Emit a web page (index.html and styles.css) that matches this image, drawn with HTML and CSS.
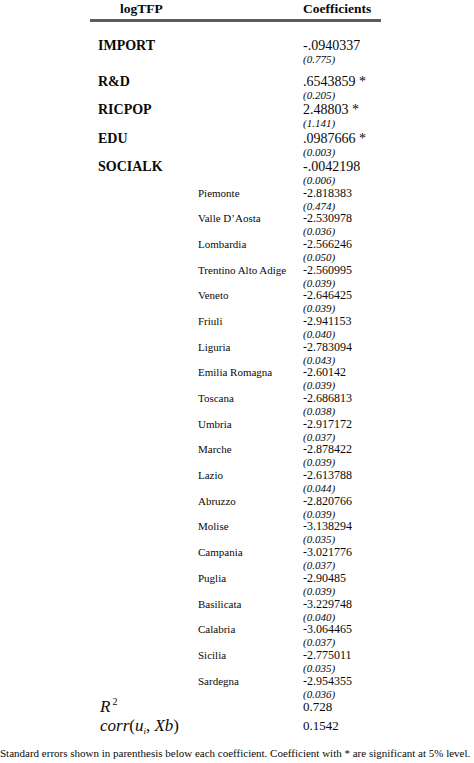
FILE: index.html
```html
<!DOCTYPE html>
<html>
<head>
<meta charset="utf-8">
<link rel="stylesheet" href="styles.css">
</head>
<body>
<div class="page">
  <div class="table">
    <div class="head">
      <div class="h-label">logTFP</div>
      <div class="h-coef">Coefficients</div>
    </div>
    <div class="vars">
      <div class="var first"><div class="v-label">IMPORT</div><div class="v-cell"><div class="v-val">-.0940337</div><div class="se">(0.775)</div></div></div>
      <div class="var gap"><div class="v-label">R&amp;D</div><div class="v-cell"><div class="v-val">.6543859 *</div><div class="se">(0.205)</div></div></div>
      <div class="var"><div class="v-label">RICPOP</div><div class="v-cell"><div class="v-val">2.48803 *</div><div class="se">(1.141)</div></div></div>
      <div class="var"><div class="v-label">EDU</div><div class="v-cell"><div class="v-val">.0987666 *</div><div class="se">(0.003)</div></div></div>
      <div class="var"><div class="v-label">SOCIALK</div><div class="v-cell"><div class="v-val">-.0042198</div><div class="se">(0.006)</div></div></div>
    </div>
    <div class="regions">
      <div class="reg"><div class="r-name">Piemonte</div><div class="r-cell"><div class="r-val">-2.818383</div><div class="se">(0.474)</div></div></div>
      <div class="reg"><div class="r-name">Valle D’Aosta</div><div class="r-cell"><div class="r-val">-2.530978</div><div class="se">(0.036)</div></div></div>
      <div class="reg"><div class="r-name">Lombardia</div><div class="r-cell"><div class="r-val">-2.566246</div><div class="se">(0.050)</div></div></div>
      <div class="reg"><div class="r-name">Trentino Alto Adige</div><div class="r-cell"><div class="r-val">-2.560995</div><div class="se">(0.039)</div></div></div>
      <div class="reg"><div class="r-name">Veneto</div><div class="r-cell"><div class="r-val">-2.646425</div><div class="se">(0.039)</div></div></div>
      <div class="reg"><div class="r-name">Friuli</div><div class="r-cell"><div class="r-val">-2.941153</div><div class="se">(0.040)</div></div></div>
      <div class="reg"><div class="r-name">Liguria</div><div class="r-cell"><div class="r-val">-2.783094</div><div class="se">(0.043)</div></div></div>
      <div class="reg"><div class="r-name">Emilia Romagna</div><div class="r-cell"><div class="r-val">-2.60142</div><div class="se">(0.039)</div></div></div>
      <div class="reg"><div class="r-name">Toscana</div><div class="r-cell"><div class="r-val">-2.686813</div><div class="se">(0.038)</div></div></div>
      <div class="reg"><div class="r-name">Umbria</div><div class="r-cell"><div class="r-val">-2.917172</div><div class="se">(0.037)</div></div></div>
      <div class="reg"><div class="r-name">Marche</div><div class="r-cell"><div class="r-val">-2.878422</div><div class="se">(0.039)</div></div></div>
      <div class="reg"><div class="r-name">Lazio</div><div class="r-cell"><div class="r-val">-2.613788</div><div class="se">(0.044)</div></div></div>
      <div class="reg"><div class="r-name">Abruzzo</div><div class="r-cell"><div class="r-val">-2.820766</div><div class="se">(0.039)</div></div></div>
      <div class="reg"><div class="r-name">Molise</div><div class="r-cell"><div class="r-val">-3.138294</div><div class="se">(0.035)</div></div></div>
      <div class="reg"><div class="r-name">Campania</div><div class="r-cell"><div class="r-val">-3.021776</div><div class="se">(0.037)</div></div></div>
      <div class="reg"><div class="r-name">Puglia</div><div class="r-cell"><div class="r-val">-2.90485</div><div class="se">(0.039)</div></div></div>
      <div class="reg"><div class="r-name">Basilicata</div><div class="r-cell"><div class="r-val">-3.229748</div><div class="se">(0.040)</div></div></div>
      <div class="reg"><div class="r-name">Calabria</div><div class="r-cell"><div class="r-val">-3.064465</div><div class="se">(0.037)</div></div></div>
      <div class="reg"><div class="r-name">Sicilia</div><div class="r-cell"><div class="r-val">-2.775011</div><div class="se">(0.035)</div></div></div>
      <div class="reg"><div class="r-name">Sardegna</div><div class="r-cell"><div class="r-val">-2.954355</div><div class="se">(0.036)</div></div></div>
    </div>
    <div class="stats">
      <div class="stat"><div class="s-label"><i>R</i><sup>2</sup></div><div class="s-val">0.728</div></div>
      <div class="stat"><div class="s-label"><i>corr</i>(<i>u</i><sub><i>i</i></sub>, <i>Xb</i>)</div><div class="s-val">0.1542</div></div>
    </div>
  </div>
  <div class="note">Standard errors shown in parenthesis below each coefficient. Coefficient with * are significant at 5% level.</div>
</div>
</body>
</html>
```
FILE: styles.css
```css
html, body {
  margin: 0;
  padding: 0;
  background: #ffffff;
}
body {
  font-family: "Liberation Serif", "Times New Roman", serif;
  color: #0a0a0a;
}
.page {
  width: 474px;
  height: 763px;
  overflow: hidden;
}
.table {
  margin-left: 90px;
  width: 291px;
}
.head {
  display: flex;
  font-weight: bold;
  font-size: 13.5px;
  line-height: 17px;
  padding-bottom: 2px;
  border-bottom: 3px solid #5c5c5c;
}
.h-label {
  width: 213px;
  padding-left: 30px;
  box-sizing: border-box;
}
.h-coef {
  flex: 1;
}
.vars {
  padding-top: 15.5px;
}
.var {
  display: flex;
}
.var.gap {
  margin-top: 7.5px;
}
.v-label {
  width: 213px;
  padding-left: 8px;
  box-sizing: border-box;
  font-weight: bold;
  font-size: 14px;
  line-height: 15px;
}
.v-val {
  font-size: 14px;
  line-height: 15px;
}
.v-cell .se {
  line-height: 13.5px;
}
.se {
  font-style: italic;
  font-size: 11px;
}
.regions {
  margin-top: -1px;
}
.reg {
  display: flex;
}
.r-name {
  width: 213px;
  padding-left: 108px;
  box-sizing: border-box;
  font-size: 11px;
  line-height: 13px;
}
.r-val {
  font-size: 12px;
  line-height: 13px;
}
.r-cell .se {
  line-height: 12.68px;
}
.stats {
  margin-top: -3px;
}
.stat {
  display: flex;
  align-items: center;
  height: 19px;
}
.s-label {
  width: 213px;
  padding-left: 10px;
  box-sizing: border-box;
  font-size: 17px;
  line-height: 19px;
}
.s-label sup {
  font-size: 10px;
  vertical-align: 7px;
  line-height: 0;
  margin-left: 2px;
}
.s-label sub {
  font-size: 9px;
  vertical-align: -3px;
  line-height: 0;
}
.s-val {
  font-size: 13px;
  line-height: 19px;
}
.note {
  margin-top: 11px;
  font-size: 11px;
  line-height: 14px;
  white-space: nowrap;
}
```
